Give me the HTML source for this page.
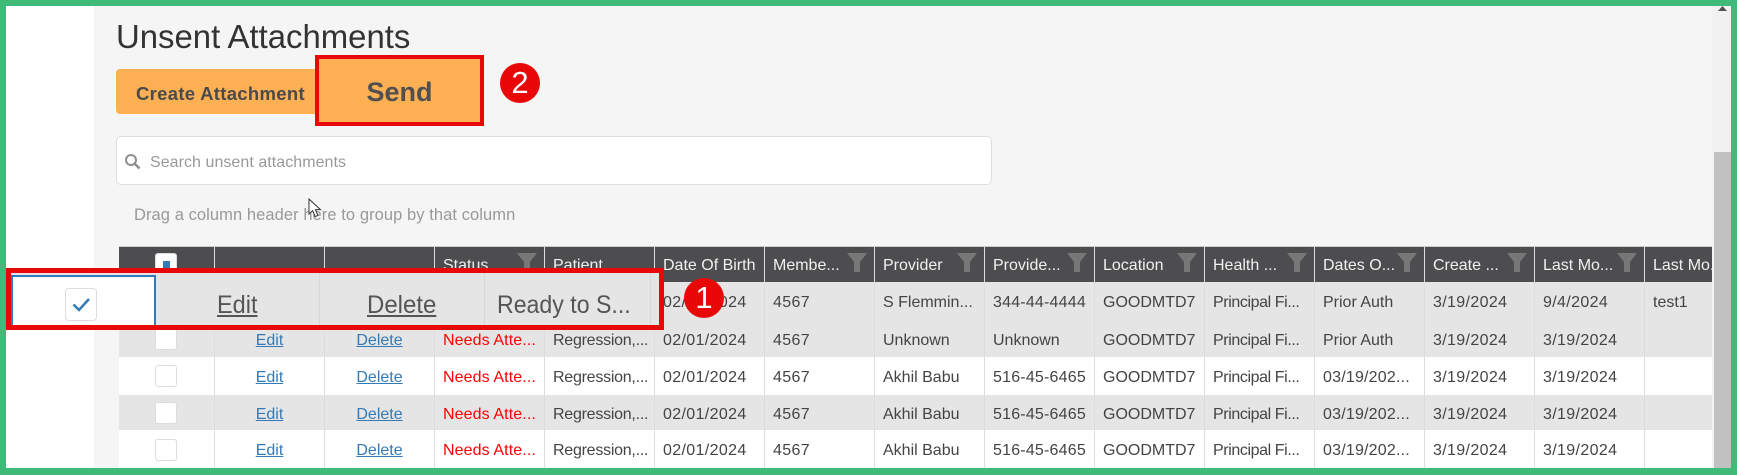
<!DOCTYPE html>
<html><head><meta charset="utf-8"><style>
html,body{margin:0;padding:0}
body{width:1737px;height:475px;position:relative;overflow:hidden;background:#fff;font-family:"Liberation Sans",sans-serif}
.a{position:absolute;white-space:nowrap}
#wrap{position:absolute;left:119px;top:246px;width:1593px;height:222px;overflow:hidden;background:#fff}
table{border-collapse:separate;border-spacing:0;table-layout:fixed;width:1636px;font-size:16px;color:#444}
td,th{padding:4px 0 0 8px;border-right:1.5px solid #ddd;overflow:hidden;white-space:nowrap;font-weight:normal;text-align:left;box-sizing:border-box;position:relative}
thead th{height:36px;padding-top:2px;background:#4d4d4f;color:#f0f0f0;border-color:#ddd;border-top:1px solid #ccc}
tbody tr.g td{background:#e5e5e5}
td.c{text-align:center;padding-left:0}
td a{color:#337ab7;text-decoration:underline}
td.s{color:#f00;letter-spacing:.1px}
.d{letter-spacing:.35px}
.p{letter-spacing:-.4px}
.r{letter-spacing:-.25px}
.n{letter-spacing:.2px}
.cb{position:absolute;left:155px;width:20px;height:20px;background:#fff;border:1px solid #ddd;border-radius:3px}
svg.f{position:absolute;right:7px;top:6px}
</style></head><body>
<div class="a" style="left:94px;top:6px;width:1618px;height:463px;background:#f5f5f5"></div>
<div class="a" style="left:1712px;top:6px;width:19px;height:463px;background:#f1f1f1"></div>
<div class="a" style="left:1714px;top:152px;width:17px;height:317px;background:#c1c1c1"></div>
<svg class="a" style="left:1718px;top:6px" width="9" height="5"><path d="M4.5 0L9 5H0Z" fill="#505050"/></svg>

<div class="a" style="left:116px;top:18px;font-size:32.9px;line-height:38px;color:#333">Unsent Attachments</div>

<div class="a" style="left:116px;top:69px;width:210px;height:45px;background:#fdaf54;border-radius:4px 0 0 4px"></div>
<div class="a" style="left:136px;top:83px;font-size:18.5px;line-height:22px;font-weight:bold;letter-spacing:.3px;color:#4a4a4a">Create Attachment</div>
<div class="a" style="left:315px;top:55px;width:169px;height:71px;box-sizing:border-box;background:#fdaf54;border:4.5px solid #e90808;text-align:center;font-size:27px;line-height:67px;font-weight:bold;color:#505050">Send</div>
<div class="a" style="left:500px;top:63px;width:40px;height:40px;border-radius:50%;background:#e90808;color:#fff;text-align:center;font-size:31px;line-height:40px">2</div>

<div class="a" style="left:116px;top:136px;width:876px;height:49px;box-sizing:border-box;background:#fff;border:1px solid #ddd;border-radius:5px"></div>
<svg class="a" style="left:124px;top:153px" width="17" height="17" fill="none" stroke="#8e8e8e" stroke-width="2"><circle cx="7" cy="7" r="5"/><path d="M10.5 10.5L15.5 15.5" stroke-width="2.5"/></svg>
<div class="a" style="left:150px;top:153px;font-size:16px;line-height:20px;color:#999;letter-spacing:.05px">Search unsent attachments</div>
<div class="a" style="left:134px;top:205px;font-size:16.5px;line-height:20px;color:#999;letter-spacing:.07px">Drag a column header here to group by that column</div>
<svg class="a" style="left:308px;top:198px" width="14" height="20"><path d="M1 1V16L4.6 12.6L7.2 18.6L10 17.4L7.4 11.6H12.4Z" fill="#fff" stroke="#333" stroke-width="1"/></svg>

<div id="wrap">
<table>
<colgroup><col style="width:96px"><col style="width:110px"><col style="width:110px"><col style="width:110px"><col style="width:110px"><col style="width:110px"><col style="width:110px"><col style="width:110px"><col style="width:110px"><col style="width:110px"><col style="width:110px"><col style="width:110px"><col style="width:110px"><col style="width:110px"><col style="width:110px"></colgroup>
<thead><tr>
<th></th><th></th><th></th>
<th>Status<svg class="f" width="20" height="19"><path d="M0 0H20L13 9V19H7V9Z" fill="#777"/></svg></th>
<th>Patient</th>
<th>Date Of Birth</th>
<th>Membe...<svg class="f" width="20" height="19"><path d="M0 0H20L13 9V19H7V9Z" fill="#777"/></svg></th>
<th>Provider<svg class="f" width="20" height="19"><path d="M0 0H20L13 9V19H7V9Z" fill="#777"/></svg></th>
<th>Provide...<svg class="f" width="20" height="19"><path d="M0 0H20L13 9V19H7V9Z" fill="#777"/></svg></th>
<th>Location<svg class="f" width="20" height="19"><path d="M0 0H20L13 9V19H7V9Z" fill="#777"/></svg></th>
<th>Health ...<svg class="f" width="20" height="19"><path d="M0 0H20L13 9V19H7V9Z" fill="#777"/></svg></th>
<th>Dates O...<svg class="f" width="20" height="19"><path d="M0 0H20L13 9V19H7V9Z" fill="#777"/></svg></th>
<th>Create ...<svg class="f" width="20" height="19"><path d="M0 0H20L13 9V19H7V9Z" fill="#777"/></svg></th>
<th>Last Mo...<svg class="f" width="20" height="19"><path d="M0 0H20L13 9V19H7V9Z" fill="#777"/></svg></th>
<th>Last Mo...</th>
</tr></thead>
<tbody>
<tr class="g" style="height:38px"><td></td><td class="c"></td><td class="c"></td><td></td><td></td><td class="d">02/01/2024</td><td class="d">4567</td><td>S Flemmin...</td><td class="n">344-44-4444</td><td>GOODMTD7</td><td class="p">Principal Fi...</td><td>Prior Auth</td><td class="d">3/19/2024</td><td class="d">9/4/2024</td><td>test1</td></tr>
<tr class="g" style="height:37px"><td></td><td class="c"><a>Edit</a></td><td class="c"><a>Delete</a></td><td class="s">Needs Atte...</td><td class="r">Regression,...</td><td class="d">02/01/2024</td><td class="d">4567</td><td>Unknown</td><td>Unknown</td><td>GOODMTD7</td><td class="p">Principal Fi...</td><td>Prior Auth</td><td class="d">3/19/2024</td><td class="d">3/19/2024</td><td></td></tr>
<tr style="height:38px"><td></td><td class="c"><a>Edit</a></td><td class="c"><a>Delete</a></td><td class="s">Needs Atte...</td><td class="r">Regression,...</td><td class="d">02/01/2024</td><td class="d">4567</td><td>Akhil Babu</td><td class="n">516-45-6465</td><td>GOODMTD7</td><td class="p">Principal Fi...</td><td class="n">03/19/202...</td><td class="d">3/19/2024</td><td class="d">3/19/2024</td><td></td></tr>
<tr class="g" style="height:35px"><td></td><td class="c"><a>Edit</a></td><td class="c"><a>Delete</a></td><td class="s">Needs Atte...</td><td class="r">Regression,...</td><td class="d">02/01/2024</td><td class="d">4567</td><td>Akhil Babu</td><td class="n">516-45-6465</td><td>GOODMTD7</td><td class="p">Principal Fi...</td><td class="n">03/19/202...</td><td class="d">3/19/2024</td><td class="d">3/19/2024</td><td></td></tr>
<tr style="height:38px"><td></td><td class="c"><a>Edit</a></td><td class="c"><a>Delete</a></td><td class="s">Needs Atte...</td><td class="r">Regression,...</td><td class="d">02/01/2024</td><td class="d">4567</td><td>Akhil Babu</td><td class="n">516-45-6465</td><td>GOODMTD7</td><td class="p">Principal Fi...</td><td class="n">03/19/202...</td><td class="d">3/19/2024</td><td class="d">3/19/2024</td><td></td></tr>
</tbody></table>
</div>

<div class="cb a" style="top:253px"></div>
<div class="a" style="left:163px;top:261px;width:7px;height:10px;background:#337ab7"></div>
<div class="cb a" style="top:328px"></div>
<div class="cb a" style="top:365px"></div>
<div class="cb a" style="top:402px"></div>
<div class="cb a" style="top:439px"></div>

<!-- highlight -->
<div class="a" style="left:6px;top:268px;width:658px;height:62px;box-sizing:border-box;border:5px solid #e90808;background:#e5e5e5;overflow:hidden">
  <div class="a" style="left:0;top:2px;width:145px;height:60px;box-sizing:border-box;background:#fff;border:2px solid #337ab7;border-bottom:0"></div>
  <div class="a" style="left:54px;top:15px;width:32px;height:33px;box-sizing:border-box;background:#fff;border:1px solid #ddd;border-radius:4px">
    <svg width="30" height="31" style="display:block"><path d="M7.5 15.5L13 21L23 10" fill="none" stroke="#337ab7" stroke-width="2.5"/></svg>
  </div>
  <div class="a" style="left:308px;top:0;width:1px;height:52px;background:#d8d8d8"></div>
  <div class="a" style="left:473px;top:0;width:1px;height:52px;background:#d8d8d8"></div>
  <div class="a" style="left:639px;top:0;width:1px;height:52px;background:#d8d8d8"></div>
  <div class="a" style="left:206px;top:17px;font-size:25px;line-height:30px;color:#555;text-decoration:underline;transform:scaleX(.94);transform-origin:0 0">Edit</div>
  <div class="a" style="left:356px;top:17px;font-size:25px;line-height:30px;color:#555;text-decoration:underline;transform:scaleX(.96);transform-origin:0 0">Delete</div>
  <div class="a" style="left:486px;top:17px;font-size:25px;line-height:30px;color:#555;transform:scaleX(.925);transform-origin:0 0">Ready to S...</div>
</div>
<div class="a" style="left:684px;top:278px;width:40px;height:40px;border-radius:50%;background:#e90808;color:#fff;text-align:center;font-size:31px;line-height:40px">1</div>

<!-- outer green frame -->
<div class="a" style="left:0;top:0;width:1737px;height:6px;background:#3fba78"></div>
<div class="a" style="left:0;top:468px;width:1737px;height:7px;background:#3fba78"></div>
<div class="a" style="left:0;top:0;width:6px;height:475px;background:#3fba78"></div>
<div class="a" style="left:1731px;top:0;width:6px;height:475px;background:#3fba78"></div>
</body></html>
